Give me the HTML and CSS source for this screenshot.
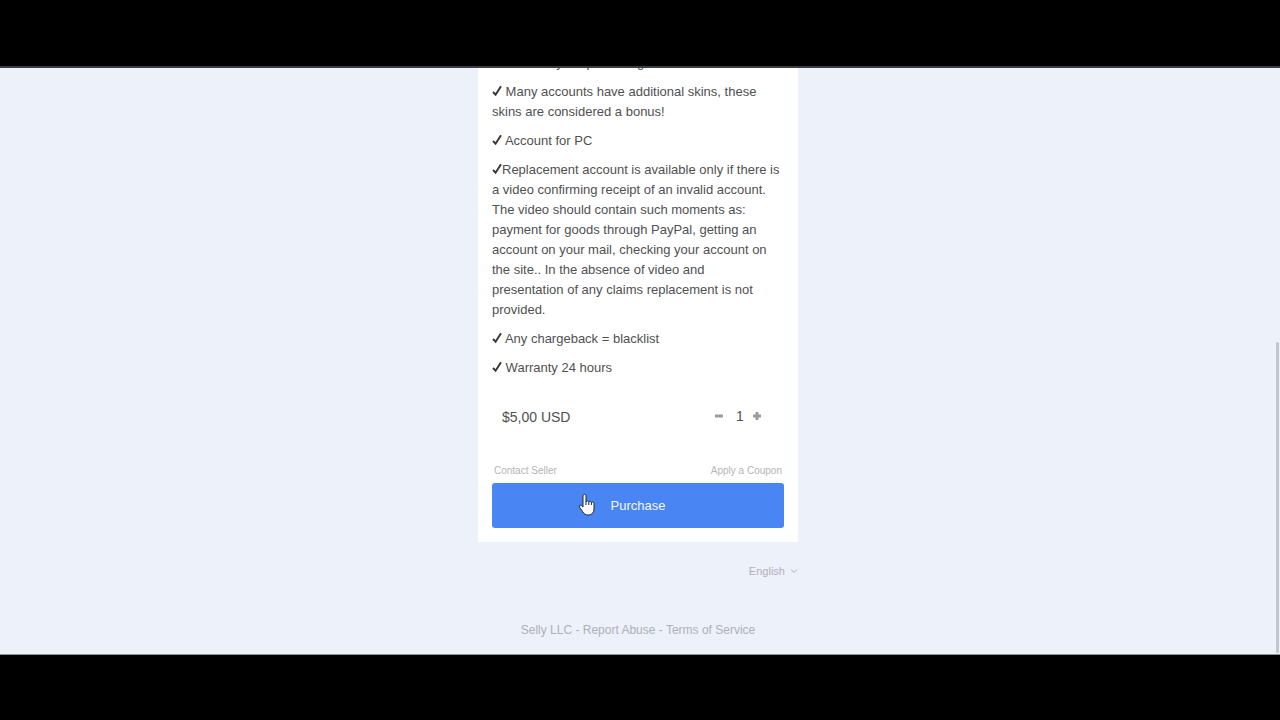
FILE: index.html
```html
<!DOCTYPE html>
<html lang="en">
<head>
<meta charset="utf-8">
<title>Purchase</title>
<link rel="stylesheet" href="styles.css">
</head>
<body>
<main class="viewport">
  <div class="page">
    <section class="card">
      <div class="description">
        <p><svg class="check" viewBox="0 0 10 12"><path d="M1 7 3.600 9.700 9 1.200"/></svg> Discovery via promoting</p>
        <p><svg class="check" viewBox="0 0 10 12"><path d="M1 7 3.600 9.700 9 1.200"/></svg> Many accounts have additional skins, these<br>skins are considered a bonus!</p>
        <p><svg class="check" viewBox="0 0 10 12"><path d="M1 7 3.600 9.700 9 1.200"/></svg> Account for PC</p>
        <p><svg class="check" viewBox="0 0 10 12"><path d="M1 7 3.600 9.700 9 1.200"/></svg>Replacement account is available only if there is<br>a video confirming receipt of an invalid account.<br>The video should contain such moments as:<br>payment for goods through PayPal, getting an<br>account on your mail, checking your account on<br>the site.. In the absence of video and<br>presentation of any claims replacement is not<br>provided.</p>
        <p><svg class="check" viewBox="0 0 10 12"><path d="M1 7 3.600 9.700 9 1.200"/></svg> Any chargeback = blacklist</p>
        <p><svg class="check" viewBox="0 0 10 12"><path d="M1 7 3.600 9.700 9 1.200"/></svg> Warranty 24 hours</p>
      </div>
      <div class="order">
        <span class="price">$5,00 USD</span>
        <div class="quantity">
          <button class="step" type="button" aria-label="Decrease quantity"><svg viewBox="0 0 10 10"><path d="M1 5h8"/></svg></button>
          <input class="count" type="text" value="1" aria-label="Quantity">
          <button class="step" type="button" aria-label="Increase quantity"><svg viewBox="0 0 10 10"><path d="M1 5h8M5 1v8"/></svg></button>
        </div>
      </div>
      <div class="links">
        <a href="#contact">Contact Seller</a>
        <a href="#coupon">Apply a Coupon</a>
      </div>
      <button class="purchase" type="button">Purchase
        <svg class="cursor" viewBox="0 0 18 24" aria-hidden="true"><path d="M5 14V3.200C5 .6 8 .6 8 3.200V9c0-1.600 2.800-1.500 2.800.3 0-1.400 2.600-1.300 2.600.5 0-1.200 2.600-1 2.600.8V16c0 3.400-2 6-5.600 6-3 0-4.400-1.200-5.800-3.400L1.500 14.200c-1-1.800 1-2.700 2.100-1.500L5 14z"/><path d="M8 9v3M10.800 9.300V12M13.400 9.800V12"/></svg>
      </button>
    </section>
    <div class="language">
      <button class="language-button" type="button">English <svg viewBox="0 0 8 6"><path d="M1 1.500 4 4.500 7 1.500"/></svg></button>
    </div>
    <footer class="footer"><a href="#selly">Selly LLC</a> - <a href="#abuse">Report Abuse</a> - <a href="#terms">Terms of Service</a></footer>
  </div>
  <div class="scroll-thumb"></div>
</main>
</body>
</html>
```
FILE: styles.css
```css
* { box-sizing: border-box; }
body {
  margin: 0;
  height: 100vh;
  padding: 66px 0 65px;
  background: #000;
  color: #505052;
  font-family: "Liberation Sans", Arial, sans-serif;
  font-size: 13px;
  line-height: 20px;
}
button, input { font: inherit; color: inherit; border: 0; background: none; padding: 0; }
a { color: inherit; text-decoration: none; }
svg { fill: none; stroke: currentColor; }
.viewport {
  position: relative;
  height: 100%;
  overflow: hidden;
  display: flex;
  flex-direction: column;
  justify-content: flex-end;
  align-items: center;
  background: #edf1fa;
  border-top: 2px solid #3b3d42;
  border-bottom: 1px solid #8c959b;
}
.page { width: 100%; max-width: 320px; margin-right: 4px; }
.card { padding: 14px; background: #fff; }
.description p { margin: 0 0 9px; white-space: nowrap; }
.check { width: 10px; height: 12px; vertical-align: -1px; stroke: #38383a; stroke-width: 2; }
.order {
  display: flex;
  align-items: center;
  justify-content: space-between;
  margin-top: 28px;
  padding: 0 22px 0 10px;
}
.price { font-size: 14px; }
.quantity { display: flex; align-items: center; padding-bottom: 2px; font-size: 14px; }
.step { display: flex; color: #9b9b9b; }
.step svg { width: 10px; height: 10px; stroke-width: 3; }
.count { width: 28px; padding-left: 4px; text-align: center; }
.links {
  display: flex;
  justify-content: space-between;
  margin-top: 33px;
  padding: 0 2px;
  color: #b4b4b6;
  font-size: 10px;
}
.purchase {
  position: relative;
  display: block;
  width: 100%;
  height: 45px;
  margin-top: 2px;
  border-radius: 3px;
  background: #4a86f3;
  color: #f2f6ff;
}
.cursor {
  position: absolute;
  left: 86px;
  top: 10px;
  width: 18px;
  height: 24px;
  fill: #fff;
  stroke: #1b2440;
}
.language { display: flex; justify-content: flex-end; margin-top: 19px; color: #adb0b7; }
.language-button { font-size: 11px; }
.language-button svg { width: 8px; height: 6px; margin-left: 2px; vertical-align: 1px; }
.footer { margin: 39px 0 14px; text-align: center; color: #adb0b7; font-size: 12px; }
.scroll-thumb {
  position: absolute;
  right: 1px;
  bottom: 1px;
  width: 3px;
  height: 53%;
  border-radius: 2px;
  background: #c3c6cf;
}
```
